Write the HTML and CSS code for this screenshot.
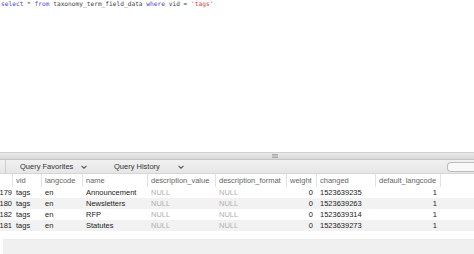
FILE: index.html
```html
<!DOCTYPE html>
<html>
<head>
<meta charset="utf-8">
<link rel="stylesheet" href="styles.css">
</head>
<body>
<div class="app">
  <div class="editor">
    <div class="sql"><span class="kw">select</span> * <span class="kw">from</span> taxonomy_term_field_data <span class="kw">where</span> vid = <span class="str">'tags'</span></div>
  </div>
  <div class="splitter">
    <svg class="grip" width="6" height="4" viewBox="0 0 6 4"><path d="M0 0.5H6M0 2H6M0 3.5H6" stroke="#9a9a9a" stroke-width="0.8"/></svg>
  </div>
  <div class="tabs">
    <div class="tab-edge"></div>
    <div class="tab fav">Query Favorites <span class="chev"><svg width="6" height="4" viewBox="0 0 6 4"><path d="M0.5 0.8L3 3.2L5.5 0.8" fill="none" stroke="#555" stroke-width="1.1"/></svg></span></div>
    <div class="tab hist">Query History <span class="chev"><svg width="6" height="4" viewBox="0 0 6 4"><path d="M0.5 0.8L3 3.2L5.5 0.8" fill="none" stroke="#555" stroke-width="1.1"/></svg></span></div>
    <div class="spacer"></div>
    <div class="search"></div>
  </div>
  <div class="grid head">
    <div class="c"></div>
    <div class="c">vid</div>
    <div class="c">langcode</div>
    <div class="c">name</div>
    <div class="c">description_value</div>
    <div class="c">description_format</div>
    <div class="c">weight</div>
    <div class="c">changed</div>
    <div class="c">default_langcode</div>
    <div class="c last"></div>
  </div>
  <div class="grid row">
    <div class="c num">179</div><div class="c">tags</div><div class="c">en</div><div class="c">Announcement</div><div class="c null">NULL</div><div class="c null">NULL</div><div class="c r">0</div><div class="c">1523639235</div><div class="c r">1</div><div class="c"></div>
  </div>
  <div class="grid row alt">
    <div class="c num">180</div><div class="c">tags</div><div class="c">en</div><div class="c">Newsletters</div><div class="c null">NULL</div><div class="c null">NULL</div><div class="c r">0</div><div class="c">1523639263</div><div class="c r">1</div><div class="c"></div>
  </div>
  <div class="grid row">
    <div class="c num">182</div><div class="c">tags</div><div class="c">en</div><div class="c">RFP</div><div class="c null">NULL</div><div class="c null">NULL</div><div class="c r">0</div><div class="c">1523639314</div><div class="c r">1</div><div class="c"></div>
  </div>
  <div class="grid row alt">
    <div class="c num">181</div><div class="c">tags</div><div class="c">en</div><div class="c">Statutes</div><div class="c null">NULL</div><div class="c null">NULL</div><div class="c r">0</div><div class="c">1523639273</div><div class="c r">1</div><div class="c"></div>
  </div>
  <div class="filler"></div>
  <div class="bottom"></div>
</div>
</body>
</html>
```
FILE: styles.css
```css
html, body {
  margin: 0;
  padding: 0;
  background: #ffffff;
}
.app {
  width: 474px;
  height: 254px;
  overflow: hidden;
  display: flex;
  flex-direction: column;
  font-family: "Liberation Sans", Arial, sans-serif;
  font-size: 7.5px;
  color: #222;
}
.editor {
  height: 152px;
  flex: none;
  background: #fff;
  overflow: hidden;
}
.sql {
  font-family: "DejaVu Sans Mono", "Liberation Mono", monospace;
  font-size: 6.2px;
  line-height: 7px;
  margin-top: 0;
  padding-left: 1px;
  color: #444;
  white-space: pre;
}
.kw { color: #4a4ad2; }
.str { color: #d03a3c; }
.splitter {
  height: 6px;
  flex: none;
  background: linear-gradient(#e9e9e9, #d9d9d9);
  border-top: 1px solid #d0d0d0;
  border-bottom: 1px solid #c4c4c4;
  display: flex;
  align-items: center;
  justify-content: center;
  padding-left: 76px;
}
.grip { display: block; }
.tabs {
  height: 13px;
  flex: none;
  display: flex;
  align-items: center;
  background: linear-gradient(#f1f1f1, #e6e6e6);
  border-bottom: 1px solid #d6d6d6;
  color: #333;
}
.tab-edge {
  width: 5px;
  height: 100%;
  border-right: 1px solid #cfcfcf;
  flex: none;
}
.tab {
  display: flex;
  align-items: center;
  white-space: nowrap;
}
.fav { margin-left: 14px; width: 94px; }
.hist { width: 80px; }
.chev { display: inline-flex; }
.fav .chev { margin-left: 8px; }
.hist .chev { margin-left: 18px; }
.spacer { flex: 1; }
.search {
  width: 26px;
  height: 8px;
  border: 1px solid #bdbdbd;
  border-right: none;
  border-radius: 4px 0 0 4px;
  background: #f8f8f8;
}
.grid {
  display: grid;
  grid-template-columns: 13px 29px 41px 65px 68px 71px 30px 59px 65px 1fr;
  flex: none;
}
.head {
  height: 13px;
  color: #666;
  background: #fff;
}
.head .c {
  border-right: 1px solid #e2e2e2;
  padding-left: 3px;
}
.head .c.last { border-right: none; }
.c {
  display: flex;
  align-items: center;
  white-space: nowrap;
  overflow: hidden;
  padding-left: 3px;
  box-sizing: border-box;
}
.row {
  height: 11px;
  background: #fff;
}
.row.alt { background: #f2f2f2; }
.num {
  justify-content: flex-end;
  padding-left: 0;
  padding-right: 1px;
}
.null { color: #b0b0b0; }
.r {
  justify-content: flex-end;
  padding-right: 4px;
}
.filler {
  height: 8px;
  flex: none;
}
.bottom {
  flex: 1;
  margin-left: 3px;
  background: #f0f0f0;
  border-top: 1px solid #ececec;
}
```
